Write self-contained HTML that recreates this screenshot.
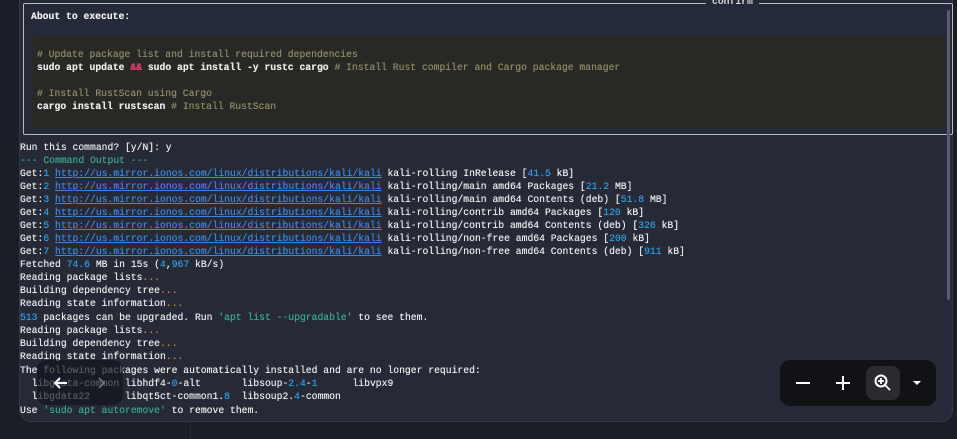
<!DOCTYPE html>
<html><head><meta charset="utf-8"><style>
*{margin:0;padding:0;box-sizing:border-box}
body{width:957px;height:439px;overflow:hidden;background:#1c1e25;font-family:"Liberation Mono",monospace;font-size:9.72px;color:#ececec;position:relative}
.panel{position:absolute;left:19px;top:0;width:934px;height:422px;background:#262a37;border-radius:0 0 12px 12px;border:1px solid #33374a;border-top:none}
.rdiv{position:absolute;left:190px;top:422px;width:1px;height:17px;background:#2a2c35}
.box{position:absolute;left:23px;top:3px;width:930px;height:132px;border:1px solid #b9bcc4;border-radius:2px;background:#252a38}
.lbl{position:absolute;left:682px;top:-7px;background:#252a38;padding:0 6px;color:#d8d8d8;font-weight:bold;line-height:10px}
.code{position:absolute;left:9px;top:32px;width:912px;height:92px;background:#282924}
.l{position:absolute;left:20px;white-space:pre;line-height:13px;text-shadow:0 0 .4px currentColor}
.c{color:#8f8a6a}.w{color:#f2f2f2;font-weight:bold}.p{color:#f0407a}
.u{color:#3d86dd;text-decoration:underline}.n{color:#2f9be0}.o{color:#d88a34}.g{color:#3aa692}
.sb{position:absolute;left:947px;top:10px;width:3px;height:290px;background:#5a5e6a;border-radius:2px}
.zoom{position:absolute;left:780px;top:360px;width:156px;height:46px;background:#111216;border-radius:10px}
.nav{position:absolute;left:37px;top:360px;width:86px;height:45px;background:rgba(20,22,28,.7);border-radius:10px}
</style></head><body>
<div class="panel"></div><div class="rdiv"></div>
<div class="box"><span class="lbl">confirm</span>
<div class="l w" style="left:7px;top:6px">About to execute:</div>
<div class="code"></div></div>
<div class="l c" style="left:37px;top:48px"># Update package list and install required dependencies</div>
<div class="l" style="left:37px;top:61px"><b>sudo apt update <span class="p">&amp;&amp;</span> sudo apt install -y rustc cargo</b> <span class="c"># Install Rust compiler and Cargo package manager</span></div>
<div class="l c" style="left:37px;top:87px"># Install RustScan using Cargo</div>
<div class="l" style="left:37px;top:100px"><b>cargo install rustscan</b> <span class="c"># Install RustScan</span></div>

<div class="l" style="top:141px">Run this command? [y/N]: y</div>
<div class="l g" style="top:154px">--- Command Output ---</div>
<div class="l" style="top:167px">Get:<span class="n">1</span> <span class="u">http://us.mirror.ionos.com/linux/distributions/kali/kali</span> kali-rolling InRelease [<span class="n">41.5</span> kB]</div>
<div class="l" style="top:180px">Get:<span class="n">2</span> <span class="u">http://us.mirror.ionos.com/linux/distributions/kali/kali</span> kali-rolling/main amd64 Packages [<span class="n">21.2</span> MB]</div>
<div class="l" style="top:193px">Get:<span class="n">3</span> <span class="u">http://us.mirror.ionos.com/linux/distributions/kali/kali</span> kali-rolling/main amd64 Contents (deb) [<span class="n">51.8</span> MB]</div>
<div class="l" style="top:206px">Get:<span class="n">4</span> <span class="u">http://us.mirror.ionos.com/linux/distributions/kali/kali</span> kali-rolling/contrib amd64 Packages [<span class="n">120</span> kB]</div>
<div class="l" style="top:219px">Get:<span class="n">5</span> <span class="u">http://us.mirror.ionos.com/linux/distributions/kali/kali</span> kali-rolling/contrib amd64 Contents (deb) [<span class="n">326</span> kB]</div>
<div class="l" style="top:232px">Get:<span class="n">6</span> <span class="u">http://us.mirror.ionos.com/linux/distributions/kali/kali</span> kali-rolling/non-free amd64 Packages [<span class="n">200</span> kB]</div>
<div class="l" style="top:245px">Get:<span class="n">7</span> <span class="u">http://us.mirror.ionos.com/linux/distributions/kali/kali</span> kali-rolling/non-free amd64 Contents (deb) [<span class="n">911</span> kB]</div>
<div class="l" style="top:258px">Fetched <span class="n">74.6</span> MB in 15s (<span class="n">4</span>,<span class="n">967</span> kB/s)</div>
<div class="l" style="top:271px">Reading package lists<span class="o">...</span></div>
<div class="l" style="top:284px">Building dependency tree<span class="o">...</span></div>
<div class="l" style="top:297px">Reading state information<span class="o">...</span></div>
<div class="l" style="top:311px"><span class="n">513</span> packages can be upgraded. Run <span class="g">'apt list --upgradable'</span> to see them.</div>
<div class="l" style="top:324px">Reading package lists<span class="o">...</span></div>
<div class="l" style="top:337px">Building dependency tree<span class="o">...</span></div>
<div class="l" style="top:350px">Reading state information<span class="o">...</span></div>
<div class="l" style="top:364px">The following packages were automatically installed and are no longer required:</div>
<div class="l" style="top:377px">  libgdata-common libhdf4-<span class="n">0</span>-alt       libsoup-<span class="n">2.4</span>-<span class="n">1</span>      libvpx9</div>
<div class="l" style="top:390px">  libgdata22      libqt5ct-common1.<span class="n">8</span>  libsoup2.<span class="n">4</span>-common</div>
<div class="l" style="top:404px">Use <span class="g">'sudo apt autoremove'</span> to remove them.</div>
<div class="sb"></div>
<div class="nav"><svg width="86" height="45" style="position:absolute;left:0;top:0"><path d="M30 23h-12M23 18l-5 5 5 5" stroke="#fff" stroke-width="2" fill="none"/><path d="M62 18l5 5-5 5" stroke="#777" stroke-width="1.5" fill="none"/></svg></div>
<div class="zoom"><svg width="156" height="46" style="position:absolute;left:0;top:0">
<path d="M16 23h14M56 23h14M63 16v14" stroke="#fff" stroke-width="2"/>
<rect x="86" y="6" width="34" height="34" rx="8" fill="#2a2b30"/>
<circle cx="101" cy="21" r="5.5" stroke="#fff" stroke-width="2" fill="none"/><path d="M105 25l5 5M98 21h6M101 18v6" stroke="#fff" stroke-width="1.8"/>
<path d="M133 21h8l-4 4z" fill="#fff"/></svg></div>
</body></html>
